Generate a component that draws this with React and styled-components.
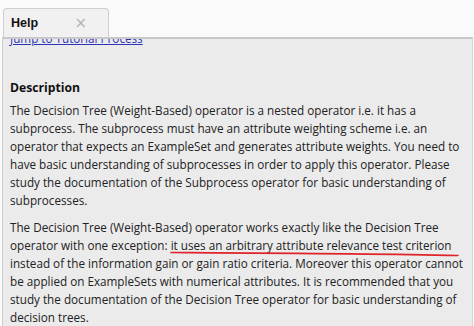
import React from "react";
import styled, { createGlobalStyle } from "styled-components";

const Global = createGlobalStyle`
  html, body { margin: 0; padding: 0; background: #fafafa; }
  body { width: 474px; height: 326px; overflow: hidden; }
`;

const Frame = styled.div`
  width: 474px;
  height: 326px;
  display: flex;
  flex-direction: column;
  background: #fafafa;
`;

const TabStrip = styled.div`
  height: 37px;
  display: flex;
  align-items: flex-end;
  padding-left: 3px;
  box-sizing: border-box;
  position: relative;
  z-index: 2;
`;

const Tab = styled.div`
  width: 106px;
  height: 29px;
  box-sizing: border-box;
  display: flex;
  align-items: center;
  justify-content: space-between;
  padding: 0 21px 0 7px;
  background: #f1f1f1;
  border: 1px solid #cfcfcf;
  border-bottom: none;
  border-radius: 4px 4px 0 0;
  font-family: "Liberation Sans", Arial, sans-serif;
  font-weight: bold;
  font-size: 12.5px;
  color: #111;
`;

const Close = styled.span`
  font-family: "DejaVu Sans", sans-serif;
  font-weight: normal;
  font-size: 15px;
  color: #b4b4b4;
`;

const Panel = styled.div`
  flex: 1;
  overflow: hidden;
  background: #ebebeb;
  border-top: 2px solid #c9c9c9;
  border-left: 1px solid #cdcdcd;
  border-right: 1px solid #d6d6d6;
  margin: 0 1px 0 2px;
`;

const Content = styled.div`
  margin-top: -10px;
  padding: 0 7px;
  font-family: "Open Sans", sans-serif;
  font-size: 11.7px;
  line-height: 18px;
  color: #222;
  white-space: nowrap;
`;

const Link = styled.a`
  color: #2b33b8;
  text-decoration: underline;
  display: block;
`;

const Heading = styled.div`
  font-weight: bold;
  font-size: 12.2px;
  margin-top: 32px;
  margin-bottom: 4px;
  color: #111;
`;

const Para = styled.p`
  margin: 0 0 9px 0;
`;

const Marked = styled.span`
  position: relative;
`;

const Underline = styled.svg`
  position: absolute;
  left: -1px;
  top: 14px;
  width: 290px;
  height: 8px;
  overflow: visible;
`;

export default function App() {
  return (
    <>
      <Global />
      <Frame>
        <TabStrip>
          <Tab>
            <span>Help</span>
            <Close>×</Close>
          </Tab>
        </TabStrip>
        <Panel>
          <Content>
            <Link href="#">Jump to Tutorial Process</Link>
            <Heading>Description</Heading>
            <Para>
              The Decision Tree (Weight-Based) operator is a nested operator i.e. it has a<br />
              subprocess. The subprocess must have an attribute weighting scheme i.e. an<br />
              operator that expects an ExampleSet and generates attribute weights. You need to<br />
              have basic understanding of subprocesses in order to apply this operator. Please<br />
              study the documentation of the Subprocess operator for basic understanding of<br />
              subprocesses.
            </Para>
            <Para>
              The Decision Tree (Weight-Based) operator works exactly like the Decision Tree<br />
              operator with one exception:{" "}
              <Marked>
                it uses an arbitrary attribute relevance test criterion
                <Underline viewBox="0 0 290 8" preserveAspectRatio="none">
                  <path d="M1 1.5 C 90 2, 200 2.5, 288 4.5" stroke="#e0222a" strokeWidth="1.6" fill="none" strokeLinecap="round" />
                </Underline>
              </Marked>
              <br />
              instead of the information gain or gain ratio criteria. Moreover this operator cannot<br />
              be applied on ExampleSets with numerical attributes. It is recommended that you<br />
              study the documentation of the Decision Tree operator for basic understanding of<br />
              decision trees.
            </Para>
          </Content>
        </Panel>
      </Frame>
    </>
  );
}
